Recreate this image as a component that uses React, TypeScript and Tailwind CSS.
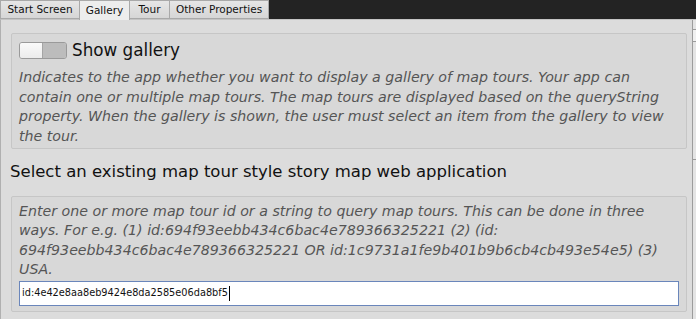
const tabs = [
  { label: "Start Screen", w: "w-[80px]" },
  { label: "Gallery", w: "w-[51px]" },
  { label: "Tour", w: "w-[41px]" },
  { label: "Other Properties", w: "w-[100px]" },
];

export default function App() {
  return (
    <div className="w-[696px] h-[319px] overflow-hidden bg-[#dcdcdc] font-['DejaVu_Sans',sans-serif] flex flex-col">
      {/* Tab bar */}
      <div className="h-[19px] bg-[#232323] flex items-end shrink-0">
        {tabs.map((t) => {
          const active = t.label === "Gallery";
          return (
            <div
              key={t.label}
              className={
                (active
                  ? "h-[20px] -mb-px bg-[#ededed] border border-b-0 border-[#a9a9a9] relative z-10 "
                  : "h-[19px] bg-gradient-to-b from-[#e6e6e6] to-[#d6d6d6] border border-[#a9a9a9] ") +
                t.w +
                " -mr-px flex items-center justify-center text-[10.5px] text-[#111]"
              }
            >
              {t.label}
            </div>
          );
        })}
      </div>

      <div className="flex flex-1 border-t border-[#c4c4c4] border-l border-l-[#b0b0b0]">
        {/* Main content */}
        <div className="flex-1 pl-[10px] pr-[5px] pt-[13px]">
          <div className="border border-[#c6c6c6] rounded-[2px] bg-[#d8d8d8] px-[7px] pt-[5px] pb-[2px]">
            <div className="flex items-center gap-[5px] h-[22px]">
              <div className="w-[48px] h-[17px] rounded-[3px] border border-[#9a9a9a] flex overflow-hidden">
                <div className="w-[23px] bg-gradient-to-b from-[#fafafa] to-[#ececec] border-r border-[#a5a5a5]" />
                <div className="flex-1 bg-[#bcbcbc]" />
              </div>
              <span className="text-[16.8px] leading-[22px] text-[#111]">Show gallery</span>
            </div>
            <p className="italic text-[14.2px] leading-[19.5px] text-[#555] mt-[7px]">
              Indicates to the app whether you want to display a gallery of map tours. Your app can contain one or multiple map tours. The map tours are displayed based on the queryString property. When the gallery is shown, the user must select an item from the gallery to view the tour.
            </p>
          </div>

          <h2 className="text-[16.5px] leading-[24px] text-[#111] mt-[11px] -ml-px">
            Select an existing map tour style story map web application
          </h2>

          <div className="mt-[12px] border border-[#c6c6c6] rounded-[2px] bg-[#d8d8d8] px-[7px] pt-[5px] pb-[5px]">
            <p className="italic text-[14.2px] leading-[19.4px] text-[#555]">
              Enter one or more map tour id or a string to query map tours. This can be done in three ways. For e.g. (1) id:694f93eebb434c6bac4e789366325221 (2) (id: 694f93eebb434c6bac4e789366325221 OR id:1c9731a1fe9b401b9b6cb4cb493e54e5) (3) USA.
            </p>
            <div className="mt-[1px] h-[25px] bg-white border border-[#6a86bb] flex items-center px-[2px] text-[9.75px] text-[#111]">
              id:4e42e8aa8eb9424e8da2585e06da8bf5
              <span className="inline-block w-px h-[15px] bg-black ml-px" />
            </div>
          </div>
        </div>

        {/* Scrollbar */}
        <div className="w-[4px] border-l border-[#9c9c9c] bg-[#e4e4e4] flex flex-col pt-[9px]">
          <div className="h-[13px] border-y border-[#9c9c9c] bg-[#f0f0f0]" />
          <div className="h-[117px]" />
          <div className="h-px bg-[#9c9c9c]" />
        </div>
      </div>
    </div>
  );
}
